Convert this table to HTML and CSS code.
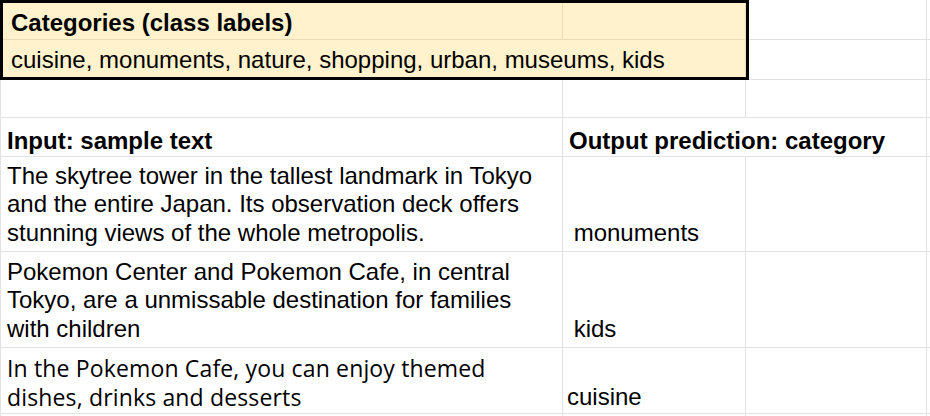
FILE: index.html
```html
<!DOCTYPE html>
<html>
<head>
<meta charset="utf-8">
<link rel="stylesheet" href="styles.css">
</head>
<body>
<div class="sheet">
  <div class="cell yellow head">Categories (class labels)</div>
  <div class="cell yellow"></div>
  <div class="cell"></div>
  <div class="cell"></div>

  <div class="cell yellow span2 list">cuisine, monuments, nature, shopping, urban, museums, kids</div>
  <div class="cell"></div>
  <div class="cell"></div>

  <div class="cell"></div>
  <div class="cell"></div>
  <div class="cell"></div>
  <div class="cell"></div>

  <div class="cell head low">Input: sample text</div>
  <div class="cell span2 head low">Output prediction: category</div>
  <div class="cell"></div>

  <div class="cell multi">The skytree tower in the tallest landmark in Tokyo and the entire Japan. Its observation deck offers stunning views of the whole metropolis.</div>
  <div class="cell out multi">&nbsp;monuments</div>
  <div class="cell"></div>
  <div class="cell"></div>

  <div class="cell multi">Pokemon Center and Pokemon Cafe, in central Tokyo, are a unmissable destination for families with children</div>
  <div class="cell out multi">&nbsp;kids</div>
  <div class="cell"></div>
  <div class="cell"></div>

  <div class="cell alt">In the Pokemon Cafe, you can enjoy themed dishes, drinks and desserts</div>
  <div class="cell out">cuisine</div>
  <div class="cell"></div>
  <div class="cell"></div>

  <div class="cell"></div>
  <div class="cell"></div>
  <div class="cell"></div>
  <div class="cell"></div>

  <div class="sel"></div>
</div>
</body>
</html>
```

FILE: styles.css
```css
html, body {
  margin: 0;
  padding: 0;
  background: #ffffff;
  overflow: hidden;
}

.sheet {
  position: relative;
  display: grid;
  grid-template-columns: 562px 183px 181px 100px;
  grid-template-rows: 40px 40px 38px 39px 95px 96px 66px 40px;
  border-left: 1px solid #e2e2e2;
  font-family: "Liberation Sans", Arial, sans-serif;
  font-size: 24px;
  line-height: 28.5px;
  color: #000;
  width: 1100px;
}

.cell {
  box-sizing: border-box;
  border-right: 1px solid #e2e2e2;
  border-bottom: 1px solid #e2e2e2;
  padding: 0 5px 2px 6px;
  display: flex;
  align-items: flex-end;
  overflow: hidden;
  white-space: normal;
}

.span2 {
  grid-column: span 2;
  white-space: nowrap;
}

.head {
  font-weight: bold;
}

.low {
  padding-bottom: 1px;
}

.multi {
  padding-bottom: 4px;
}

.yellow {
  background: #fff2cc;
  border-color: #e8dcb6;
}

.list,
.yellow.head {
  padding-left: 10px;
}

.list {
  padding-bottom: 5px;
}

.out {
  padding-left: 4px;
}

.alt {
  font-family: "Open Sans", sans-serif;
  font-size: 23px;
  letter-spacing: 0.15px;
}

.sel {
  position: absolute;
  left: -1px;
  top: 0;
  width: 749px;
  height: 80px;
  box-sizing: border-box;
  border: 3px solid #000;
  pointer-events: none;
}
```
